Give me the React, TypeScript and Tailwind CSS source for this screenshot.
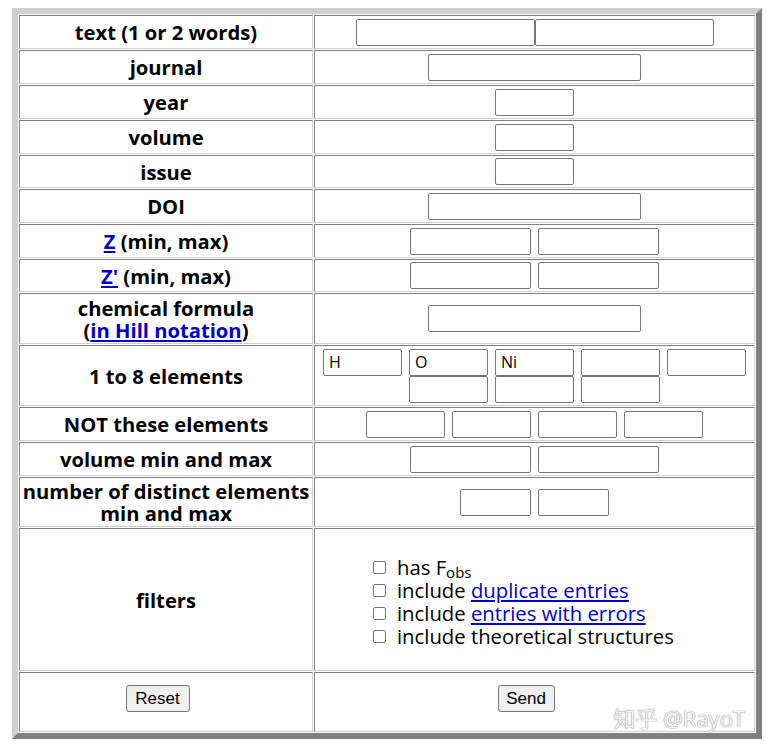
import React from "react";

const cell =
  "border border-t-[#808080] border-l-[#808080] border-r-[#cfcfcf] border-b-[#cfcfcf] p-[1px] align-middle";
const label =
  "text-center font-bold text-[20.2px] leading-[22px] whitespace-nowrap text-black font-['Open_Sans',sans-serif]";
const link = "text-[#0000cc] underline";

const Field = ({ w, value }: { w: number; value?: string }) => (
  <input
    type="text"
    defaultValue={value}
    style={{ width: w }}
    className="h-[27px] border border-[#767676] rounded-[2px] bg-white px-[5px] text-[16px] text-black font-['Open_Sans',sans-serif] outline-none"
  />
);

const Inputs = ({ w, n, gap = true, values = [] }: { w: number; n: number; gap?: boolean; values?: string[] }) => (
  <div className={`flex flex-wrap justify-center ${gap ? "gap-x-[7px]" : "gap-x-0"}`}>
    {Array.from({ length: n }).map((_, i) => (
      <Field key={i} w={w} value={values[i]} />
    ))}
  </div>
);

const Row = ({ h, left, right }: { h: number; left: React.ReactNode; right: React.ReactNode }) => (
  <tr style={{ height: h }}>
    <td className={`${cell} ${label} w-[294px]`}>{left}</td>
    <td className={cell}>{right}</td>
  </tr>
);

const Check = ({ children, first }: { children: React.ReactNode; first?: boolean }) => (
  <div className={`flex items-center leading-[23px] ${first ? "pt-[4px]" : ""}`}>
    <span className="inline-block w-[13px] h-[13px] border border-[#767676] rounded-[2px] bg-white mr-[11px]" />
    <span>{children}</span>
  </div>
);

const btn =
  "h-[27px] bg-[#efefef] border border-[#767676] rounded-[3px] text-[17px] text-black font-['Liberation_Sans',Arial,sans-serif]";

export default function App() {
  return (
    <div className="relative min-h-[751px] bg-white pl-[12px] pt-[8px]">
      <table className="w-[750px] table-fixed border-separate border-spacing-[1px] border-[6px] border-t-[#cfcfcf] border-l-[#cfcfcf] border-r-[#808080] border-b-[#808080]">
        <tbody>
          <Row h={34} left="text (1 or 2 words)" right={<Inputs w={179} n={2} gap={false} />} />
          <Row h={34} left="journal" right={<Inputs w={213} n={1} />} />
          <Row h={34} left="year" right={<Inputs w={79} n={1} />} />
          <Row h={34} left="volume" right={<Inputs w={79} n={1} />} />
          <Row h={33} left="issue" right={<Inputs w={79} n={1} />} />
          <Row h={34} left="DOI" right={<Inputs w={213} n={1} />} />
          <Row
            h={34}
            left={
              <>
                <a className={link} href="#">Z</a> (min, max)
              </>
            }
            right={<Inputs w={121} n={2} />}
          />
          <Row
            h={33}
            left={
              <>
                <a className={link} href="#">Z'</a> (min, max)
              </>
            }
            right={<Inputs w={121} n={2} />}
          />
          <Row
            h={51}
            left={
              <>
                chemical formula
                <br />(<a className={link} href="#">in Hill notation</a>)
              </>
            }
            right={<Inputs w={213} n={1} />}
          />
          <Row h={61} left="1 to 8 elements" right={<Inputs w={79} n={8} values={["H", "O", "Ni"]} />} />
          <Row h={34} left="NOT these elements" right={<Inputs w={79} n={4} />} />
          <Row h={34} left="volume min and max" right={<Inputs w={121} n={2} />} />
          <Row
            h={50}
            left={
              <>
                number of distinct elements
                <br />
                min and max
              </>
            }
            right={<Inputs w={71} n={2} />}
          />
          <Row
            h={143}
            left="filters"
            right={
              <div className="flex flex-col items-start pl-[57px] text-[20.3px] text-black font-['Open_Sans',sans-serif]">
                <Check first>
                  has F<sub className="text-[15px]">obs</sub>
                </Check>
                <Check>
                  include <a className={link} href="#">duplicate entries</a>
                </Check>
                <Check>
                  include <a className={link} href="#">entries with errors</a>
                </Check>
                <Check>include theoretical structures</Check>
              </div>
            }
          />
          <tr style={{ height: 60 }}>
            <td className={`${cell} text-center pr-[18px] pb-[9px]`}>
              <button className={`${btn} w-[64px]`}>Reset</button>
            </td>
            <td className={`${cell} text-center pr-[18px] pb-[9px]`}>
              <button className={`${btn} w-[57px]`}>Send</button>
            </td>
          </tr>
        </tbody>
      </table>
      <div className="absolute right-[22px] bottom-[22px] text-[22px] leading-none text-[#f4f4f4] [text-shadow:0_0_1px_#8a8a8a,0_0_1px_#8a8a8a] font-['Open_Sans','Noto_Sans_CJK_SC',sans-serif]">
        知乎 @RayoT
      </div>
    </div>
  );
}
